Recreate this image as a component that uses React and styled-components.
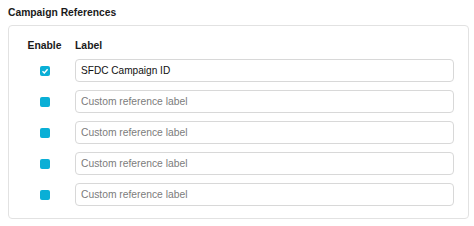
import React from "react";
import styled, { createGlobalStyle } from "styled-components";

const Global = createGlobalStyle`
  body {
    margin: 0;
    background: #fff;
    font-family: "Liberation Sans", Arial, sans-serif;
  }
`;

const Page = styled.div`
  padding: 4px 5px 0 8px;
`;

const Title = styled.h3`
  margin: 0;
  font-size: 10.3px;
  line-height: 14px;
  font-weight: bold;
  color: #1a1a1a;
  padding-top: 2px;
`;

const Card = styled.div`
  margin-top: 5px;
  width: 461px;
  border: 1px solid #e2e2e2;
  border-radius: 4px;
  padding: 13px 14px 12px 18px;
  box-sizing: border-box;
  display: grid;
  grid-template-columns: 35px 1fr;
  column-gap: 13px;
  row-gap: 8px;
`;

const Head = styled.div`
  font-size: 10.4px;
  line-height: 14px;
  font-weight: bold;
  color: #1a1a1a;
  text-align: ${(p) => (p.center ? "center" : "left")};
  margin-bottom: -2px;
`;

const Cell = styled.div`
  display: flex;
  align-items: center;
  justify-content: center;
  height: 23px;
`;

const Box = styled.span`
  width: 10px;
  height: 10px;
  border-radius: 2px;
  background: #0aafd6;
  display: flex;
  align-items: center;
  justify-content: center;
  margin-left: 1px;
`;

const Field = styled.input`
  box-sizing: border-box;
  width: 100%;
  height: 23px;
  border: 1px solid #d8d8d8;
  border-radius: 4px;
  padding: 0 5px;
  font-family: "Liberation Sans", Arial, sans-serif;
  font-size: ${(p) => (p.defaultValue ? "10.1px" : "10.3px")};
  color: #111;
  outline: none;
  &::placeholder {
    color: #7c7c7c;
  }
`;

const rows = [
  { on: true, value: "SFDC Campaign ID" },
  { on: false, value: "" },
  { on: false, value: "" },
  { on: false, value: "" },
  { on: false, value: "" },
];

export default function App() {
  return (
    <Page>
      <Global />
      <Title>Campaign References</Title>
      <Card>
        <Head center>Enable</Head>
        <Head>Label</Head>
        {rows.map((r, i) => (
          <React.Fragment key={i}>
            <Cell>
              <Box>
                {r.on && (
                  <svg width="8" height="8" viewBox="0 0 8 8">
                    <path d="M1.5 4.2 L3.3 5.9 L6.6 2.2" fill="none" stroke="#fff" strokeWidth="1.4" />
                  </svg>
                )}
              </Box>
            </Cell>
            <Field defaultValue={r.value} placeholder="Custom reference label" />
          </React.Fragment>
        ))}
      </Card>
    </Page>
  );
}
